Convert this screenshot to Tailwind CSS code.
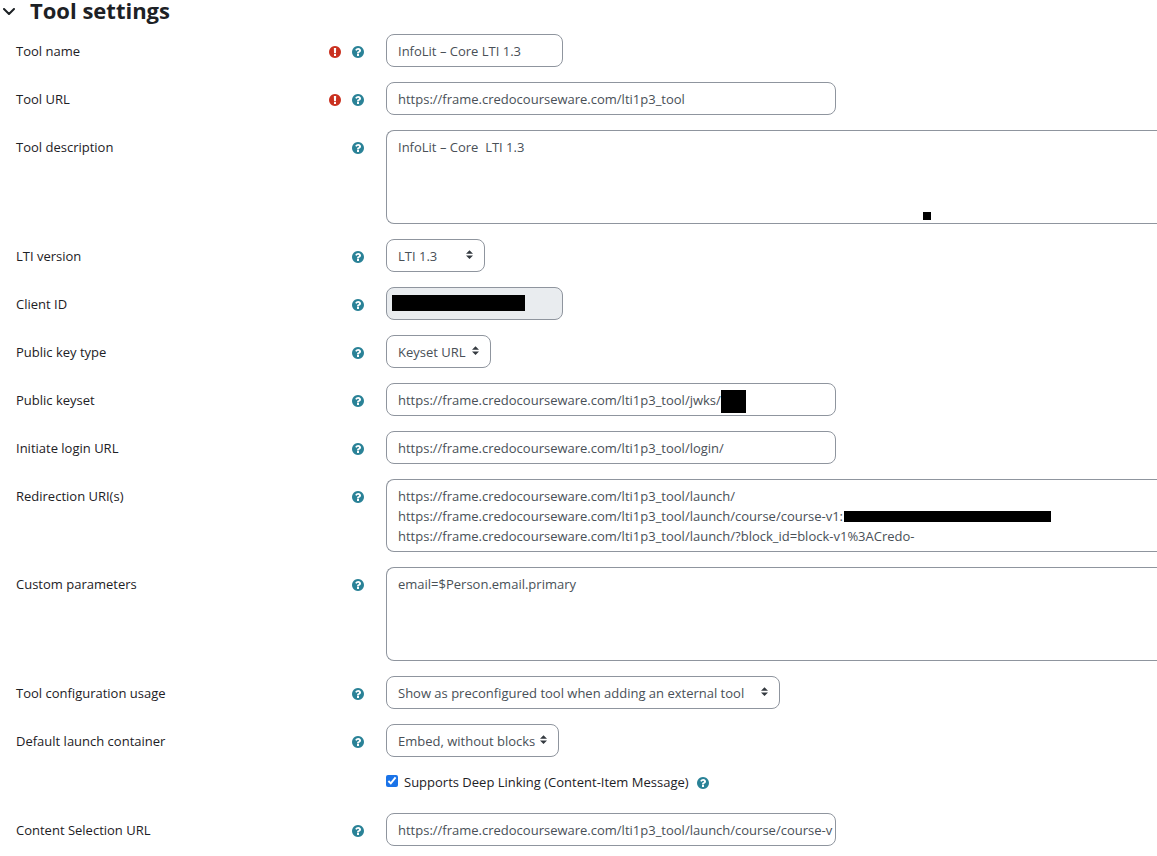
<!DOCTYPE html>
<html lang="en">

<head>
    <meta charset="UTF-8">
    <meta name="viewport" content="width=device-width, initial-scale=1.0">
    <title>Tool settings</title>
    <script src="https://cdn.jsdelivr.net/npm/@tailwindcss/browser@4"></script>
</head>

<body class="bg-white font-['Segoe_UI','Open_Sans',sans-serif] text-[13px] leading-5 text-[#1d2125]">
    <!-- Icon sprite -->
    <svg class="hidden">
        <symbol id="help" viewBox="128 128 1536 1536">
            <path fill="currentColor" d="M1024 1376v-192q0-14-9-23t-23-9h-192q-14 0-23 9t-9 23v192q0 14 9 23t23 9h192q14 0 23-9t9-23zm256-672q0-88-55.5-163t-138.5-116-170-41q-243 0-371 213-15 24 8 42l132 100q7 6 19 6 16 0 25-12 53-68 86-92 34-24 86-24 48 0 85.5 26t37.5 59q0 38-20 61t-68 45q-63 28-115.5 86.5t-52.5 125.5v36q0 14 9 23t23 9h192q14 0 23-9t9-23q0-19 21.5-49.5t54.5-49.5q32-18 49-28.5t46-35 44.5-48 28-60.5 12.5-81zm384 192q0 209-103 385.5t-279.5 279.5-385.5 103-385.5-103-279.5-279.5-103-385.5 103-385.5 279.5-279.5 385.5-103 385.5 103 279.5 279.5 103 385.5z" />
        </symbol>
        <symbol id="required" viewBox="128 128 1536 1536">
            <path fill="currentColor" d="M896 128q209 0 385.5 103t279.5 279.5 103 385.5-103 385.5-279.5 279.5-385.5 103-385.5-103-279.5-279.5-103-385.5 103-385.5 279.5-279.5 385.5-103zm128 1247v-190q0-14-9-23.5t-22-9.5h-192q-13 0-23 10t-10 23v190q0 13 10 23t23 10h192q13 0 22-9.5t9-23.5zm-2-344l18-621q0-12-10-18-10-8-24-8h-220q-14 0-24 8-10 6-10 18l17 621q0 10 10 17.5t24 7.5h203q14 0 23.5-7.5t10.5-17.5z" />
        </symbol>
        <symbol id="updown" viewBox="0 0 4 5">
            <path fill="#343a40" d="M2 0L0 2h4zm0 5L0 3h4z" />
        </symbol>
    </svg>

    <form>
        <h2 class="flex h-[34px] items-start gap-[15px] pl-[3px] text-[22px] leading-5 font-bold">
            <button type="button" class="mt-2 h-[7px] w-3" aria-label="Collapse">
                <svg class="h-[7px] w-3" viewBox="0 0 12 7" fill="none" stroke="currentColor" stroke-width="2" stroke-linecap="round" stroke-linejoin="round"><path d="M1 1l5 5 5-5" /></svg>
            </button>
            Tool settings
        </h2>

        <div class="flex flex-col gap-[15px] pl-4">
            <div class="flex">
                <div class="flex h-[33px] w-[348px] shrink-0 items-center gap-[11px]">
                    <label for="name" class="grow">Tool name</label>
                    <svg class="mt-0.5 size-3 text-[#ca3120]"><use href="#required" /></svg>
                    <button type="button" class="mt-0.5 text-[#2a8297]" aria-label="Help"><svg class="size-3"><use href="#help" /></svg></button>
                </div>
                <input id="name" type="text" value="InfoLit – Core LTI 1.3" class="ml-[22px] h-[33px] w-[177px] rounded-lg border border-[#8f959e] px-[11px] text-[#495057]">
            </div>

            <div class="flex">
                <div class="flex h-[33px] w-[348px] shrink-0 items-center gap-[11px]">
                    <label for="url" class="grow">Tool URL</label>
                    <svg class="mt-0.5 size-3 text-[#ca3120]"><use href="#required" /></svg>
                    <button type="button" class="mt-0.5 text-[#2a8297]" aria-label="Help"><svg class="size-3"><use href="#help" /></svg></button>
                </div>
                <input id="url" type="text" value="https://frame.credocourseware.com/lti1p3_tool" class="ml-[22px] h-[33px] w-[450px] rounded-lg border border-[#8f959e] px-[11px] text-[#495057]">
            </div>

            <div class="flex">
                <div class="flex h-[33px] w-[348px] shrink-0 items-center gap-[11px]">
                    <label for="description" class="grow">Tool description</label>
                    <button type="button" class="mt-0.5 text-[#2a8297]" aria-label="Help"><svg class="size-3"><use href="#help" /></svg></button>
                </div>
                <div class="relative ml-[22px] grow">
                    <textarea id="description" class="block h-[94px] w-full resize-none rounded-l-lg border border-r-0 border-[#8f959e] px-[11px] py-[6px] text-[#495057]">InfoLit – Core  LTI 1.3</textarea>
                    <span class="absolute bottom-1 left-[537px] size-2 bg-black"></span>
                </div>
            </div>

            <div class="flex">
                <div class="flex h-[33px] w-[348px] shrink-0 items-center gap-[11px]">
                    <label for="version" class="grow">LTI version</label>
                    <button type="button" class="mt-0.5 text-[#2a8297]" aria-label="Help"><svg class="size-3"><use href="#help" /></svg></button>
                </div>
                <div class="relative ml-[22px]">
                    <select id="version" class="block h-[33px] w-[99px] appearance-none rounded-lg border border-[#8f959e] px-[11px] text-[#495057]">
                        <option>LTI 1.3</option>
                    </select>
                    <svg class="pointer-events-none absolute top-[11px] right-3 h-[9px] w-[7px]"><use href="#updown" /></svg>
                </div>
            </div>

            <div class="flex">
                <div class="flex h-[33px] w-[348px] shrink-0 items-center gap-[11px]">
                    <label for="client" class="grow">Client ID</label>
                    <button type="button" class="mt-0.5 text-[#2a8297]" aria-label="Help"><svg class="size-3"><use href="#help" /></svg></button>
                </div>
                <div class="relative ml-[22px]">
                    <input id="client" type="text" disabled class="block h-[33px] w-[177px] rounded-lg border border-[#8f959e] bg-[#e9ecef] px-[11px]">
                    <span class="absolute top-2 left-[6px] h-4 w-[133px] bg-black"></span>
                </div>
            </div>

            <div class="flex">
                <div class="flex h-[33px] w-[348px] shrink-0 items-center gap-[11px]">
                    <label for="keytype" class="grow">Public key type</label>
                    <button type="button" class="mt-0.5 text-[#2a8297]" aria-label="Help"><svg class="size-3"><use href="#help" /></svg></button>
                </div>
                <div class="relative ml-[22px]">
                    <select id="keytype" class="block h-[33px] w-[105px] appearance-none rounded-lg border border-[#8f959e] px-[11px] text-[#495057]">
                        <option>Keyset URL</option>
                    </select>
                    <svg class="pointer-events-none absolute top-[11px] right-3 h-[9px] w-[7px]"><use href="#updown" /></svg>
                </div>
            </div>

            <div class="flex">
                <div class="flex h-[33px] w-[348px] shrink-0 items-center gap-[11px]">
                    <label for="keyset" class="grow">Public keyset</label>
                    <button type="button" class="mt-0.5 text-[#2a8297]" aria-label="Help"><svg class="size-3"><use href="#help" /></svg></button>
                </div>
                <div class="relative ml-[22px]">
                    <input id="keyset" type="text" value="https://frame.credocourseware.com/lti1p3_tool/jwks/" class="block h-[33px] w-[450px] rounded-lg border border-[#8f959e] px-[11px] text-[#495057]">
                    <span class="absolute top-[7px] left-[335px] h-[23px] w-[25px] bg-black"></span>
                </div>
            </div>

            <div class="flex">
                <div class="flex h-[33px] w-[348px] shrink-0 items-center gap-[11px]">
                    <label for="login" class="grow">Initiate login URL</label>
                    <button type="button" class="mt-0.5 text-[#2a8297]" aria-label="Help"><svg class="size-3"><use href="#help" /></svg></button>
                </div>
                <input id="login" type="text" value="https://frame.credocourseware.com/lti1p3_tool/login/" class="ml-[22px] h-[33px] w-[450px] rounded-lg border border-[#8f959e] px-[11px] text-[#495057]">
            </div>

            <div class="flex">
                <div class="flex h-[33px] w-[348px] shrink-0 items-center gap-[11px]">
                    <label for="redirect" class="grow">Redirection URI(s)</label>
                    <button type="button" class="mt-0.5 text-[#2a8297]" aria-label="Help"><svg class="size-3"><use href="#help" /></svg></button>
                </div>
                <div class="relative ml-[22px] grow">
                    <textarea id="redirect" class="block h-[73px] w-full resize-none overflow-hidden rounded-l-lg border border-r-0 border-[#8f959e] px-[11px] py-[6px] text-[#495057]">https://frame.credocourseware.com/lti1p3_tool/launch/
https://frame.credocourseware.com/lti1p3_tool/launch/course/course-v1:
https://frame.credocourseware.com/lti1p3_tool/launch/?block_id=block-v1%3ACredo-</textarea>
                    <span class="absolute top-8 left-[458px] h-[11px] w-[207px] bg-black"></span>
                </div>
            </div>

            <div class="flex">
                <div class="flex h-[33px] w-[348px] shrink-0 items-center gap-[11px]">
                    <label for="custom" class="grow">Custom parameters</label>
                    <button type="button" class="mt-0.5 text-[#2a8297]" aria-label="Help"><svg class="size-3"><use href="#help" /></svg></button>
                </div>
                <textarea id="custom" class="ml-[22px] block h-[94px] grow resize-none rounded-l-lg border border-r-0 border-[#8f959e] px-[11px] py-[6px] text-[#495057]">email=$Person.email.primary</textarea>
            </div>

            <div class="flex">
                <div class="flex h-[33px] w-[348px] shrink-0 items-center gap-[11px]">
                    <label for="usage" class="grow">Tool configuration usage</label>
                    <button type="button" class="mt-0.5 text-[#2a8297]" aria-label="Help"><svg class="size-3"><use href="#help" /></svg></button>
                </div>
                <div class="relative ml-[22px]">
                    <select id="usage" class="block h-[33px] w-[394px] appearance-none rounded-lg border border-[#8f959e] px-[11px] text-[#495057]">
                        <option>Show as preconfigured tool when adding an external tool</option>
                    </select>
                    <svg class="pointer-events-none absolute top-[11px] right-3 h-[9px] w-[7px]"><use href="#updown" /></svg>
                </div>
            </div>

            <div class="flex">
                <div class="flex h-[33px] w-[348px] shrink-0 items-center gap-[11px]">
                    <label for="container" class="grow">Default launch container</label>
                    <button type="button" class="mt-0.5 text-[#2a8297]" aria-label="Help"><svg class="size-3"><use href="#help" /></svg></button>
                </div>
                <div class="relative ml-[22px]">
                    <select id="container" class="block h-[33px] w-[173px] appearance-none rounded-lg border border-[#8f959e] px-[11px] text-[#495057]">
                        <option>Embed, without blocks</option>
                    </select>
                    <svg class="pointer-events-none absolute top-[11px] right-3 h-[9px] w-[7px]"><use href="#updown" /></svg>
                </div>
            </div>

            <div class="flex h-[26px] items-start pl-[370px]">
                <input id="deeplink" type="checkbox" checked class="mt-[3px] mr-[6px] size-3 accent-[#1a73e8]">
                <label for="deeplink">Supports Deep Linking (Content-Item Message)</label>
                <button type="button" class="mt-[5px] ml-2 text-[#2a8297]" aria-label="Help"><svg class="size-3"><use href="#help" /></svg></button>
            </div>

            <div class="flex">
                <div class="flex h-[33px] w-[348px] shrink-0 items-center gap-[11px]">
                    <label for="content" class="grow">Content Selection URL</label>
                    <button type="button" class="mt-0.5 text-[#2a8297]" aria-label="Help"><svg class="size-3"><use href="#help" /></svg></button>
                </div>
                <input id="content" type="text" value="https://frame.credocourseware.com/lti1p3_tool/launch/course/course-v" class="ml-[22px] h-[33px] w-[450px] rounded-lg border border-[#8f959e] pr-0.5 pl-[11px] text-[#495057]">
            </div>
        </div>
    </form>
</body>

</html>
